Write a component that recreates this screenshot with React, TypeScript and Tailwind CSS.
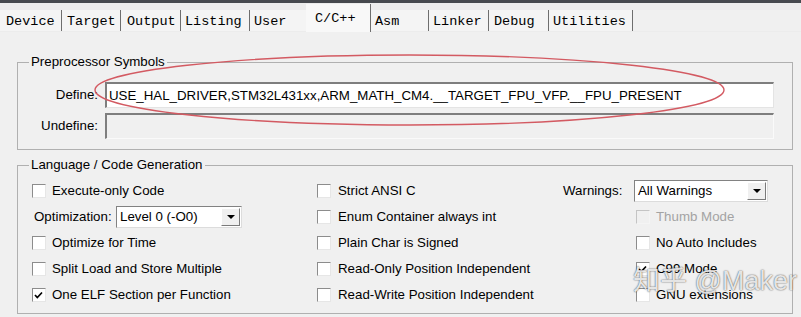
import React from "react";

const Check = ({ checked = false, disabled = false }: { checked?: boolean; disabled?: boolean }) => (
  <div
    className={
      disabled
        ? "w-[14px] h-[14px] shrink-0 border-t border-l border-t-[#c4c4c4] border-l-[#c4c4c4] border-r border-b border-r-[#f4f4f4] border-b-[#f4f4f4] bg-[#f0f0f0]"
        : "w-[14px] h-[14px] shrink-0 border-t border-l border-t-[#8c8c8c] border-l-[#8c8c8c] border-r border-b border-r-[#e6e6e6] border-b-[#e6e6e6] bg-white flex items-center justify-center"
    }
  >
    {checked && (
      <svg width="9" height="9" viewBox="0 0 9 9" className="-ml-[2px]">
        <path d="M1 4 L3.3 6.5 L8 1.5" fill="none" stroke="#000" strokeWidth="1.7" />
      </svg>
    )}
  </div>
);

const Row = ({
  label,
  checked,
  disabled,
  gap,
}: {
  label: string;
  checked?: boolean;
  disabled?: boolean;
  gap: string;
}) => (
  <div className={"h-[26px] flex items-center " + gap}>
    <Check checked={checked} disabled={disabled} />
    <span className={disabled ? "text-[#a3a3a3] leading-none" : "leading-none"}>{label}</span>
  </div>
);

const Select = ({ value, w }: { value: string; w: string }) => (
  <div
    className={
      "flex h-[22px] border-t border-l border-t-[#828282] border-l-[#828282] border-r border-b border-r-[#dcdcdc] border-b-[#dcdcdc] bg-white " +
      w
    }
  >
    <span className="flex-1 pl-[3px] leading-[20px]">{value}</span>
    <div className="w-[19px] h-[18px] mt-[1px] mr-[1px] bg-[#f0f0f0] border-t border-l border-t-white border-l-white border-r border-b border-r-[#7a7a7a] border-b-[#7a7a7a] flex items-center justify-center">
      <div className="w-0 h-0 border-l-[4px] border-r-[4px] border-t-[4px] border-l-transparent border-r-transparent border-t-black" />
    </div>
  </div>
);

const tabs: { name: string; cls: string }[] = [
  { name: "Device", cls: "w-[62px] pl-[6px] border-r border-r-[#6e6e6e]" },
  { name: "Target", cls: "w-[59px] pl-[5px] border-r border-r-[#6e6e6e]" },
  { name: "Output", cls: "w-[60px] pl-[6px] border-r border-r-[#6e6e6e]" },
  { name: "Listing", cls: "w-[69px] pl-[4px] border-r border-r-[#6e6e6e]" },
  { name: "User", cls: "w-[56px] pl-[4px]" },
];
const tabs2: { name: string; cls: string }[] = [
  { name: "Asm", cls: "w-[58px] pl-[4px] border-r border-r-[#6e6e6e]" },
  { name: "Linker", cls: "w-[60px] pl-[4px] border-r border-r-[#6e6e6e]" },
  { name: "Debug", cls: "w-[60px] pl-[5px] border-r border-r-[#6e6e6e]" },
  { name: "Utilities", cls: "w-[84px] pl-[4px] border-r border-r-[#6e6e6e]" },
];

export default function App() {
  return (
    <div className="w-[801px] h-[317px] bg-[#f0f0f0] relative overflow-hidden font-['Liberation_Sans',Arial,sans-serif] text-[13.3px] text-black">
      <div className="h-[3px] bg-[#46494e]" />
      {/* Tabs */}
      <div className="h-[29px] flex items-end bg-[#ececec] font-['Liberation_Mono',monospace] text-[13.5px]">
        {tabs.map((t) => (
          <div key={t.name} className={"h-[21px] mb-[1px] pt-[3px] leading-[18px] bg-[#f4f4f4] " + t.cls}>
            {t.name}
          </div>
        ))}
        <div className="w-[65px] h-[28px] pl-[9px] pt-[6px] bg-[#f8f8f8] border-r border-r-[#6e6e6e] leading-[18px]">
          C/C++
        </div>
        {tabs2.map((t) => (
          <div key={t.name} className={"h-[21px] mb-[1px] pt-[3px] leading-[18px] bg-[#f4f4f4] " + t.cls}>
            {t.name}
          </div>
        ))}
        <div className="flex-1 h-[21px] mb-[1px] bg-[#f0f0f0]" />
      </div>

      <div className="pl-[17px]">
        {/* Preprocessor Symbols */}
        <fieldset className="mt-[22px] w-[776px] h-[96px] border border-[#b0b0b0]">
          <legend className="ml-[11px] px-[2px] leading-[16px]">Preprocessor Symbols</legend>
          <div className="mt-[12px] flex items-center gap-[7px]">
            <span className="w-[80px] text-right">Define:</span>
            <div className="w-[669px] h-[26px] border-t-2 border-l-2 border-t-[#7e7e7e] border-l-[#7e7e7e] border-r border-b border-r-[#e4e4e4] border-b-[#e4e4e4] bg-white pl-[2px] leading-[23px] whitespace-nowrap">
              USE_HAL_DRIVER,STM32L431xx,ARM_MATH_CM4.__TARGET_FPU_VFP.__FPU_PRESENT
            </div>
          </div>
          <div className="mt-[5px] flex items-center gap-[7px]">
            <span className="w-[80px] text-right">Undefine:</span>
            <div className="w-[669px] h-[26px] border-t-2 border-l-2 border-t-[#7e7e7e] border-l-[#7e7e7e] border-r border-b border-r-[#fafafa] border-b-[#fafafa] bg-[#f0f0f0]" />
          </div>
        </fieldset>

        {/* Language / Code Generation */}
        <fieldset className="mt-[7px] w-[776px] h-[157px] border border-[#b0b0b0]">
          <legend className="ml-[11px] px-[2px] leading-[16px]">Language / Code Generation</legend>
          <div className="pt-[5px] pl-[14px] flex">
            <div className="w-[285px] flex flex-col">
              <Row label="Execute-only Code" gap="gap-[6px]" />
              <div className="h-[26px] flex items-center">
                <span className="w-[84px] pl-[2px] leading-none">Optimization:</span>
                <Select value="Level 0 (-O0)" w="w-[126px]" />
              </div>
              <Row label="Optimize for Time" gap="gap-[6px]" />
              <Row label="Split Load and Store Multiple" gap="gap-[6px]" />
              <Row label="One ELF Section per Function" gap="gap-[6px]" checked />
            </div>
            <div className="w-[246px] flex flex-col">
              <Row label="Strict ANSI C" gap="gap-[7px]" />
              <Row label="Enum Container always int" gap="gap-[7px]" />
              <Row label="Plain Char is Signed" gap="gap-[7px]" />
              <Row label="Read-Only Position Independent" gap="gap-[7px]" />
              <Row label="Read-Write Position Independent" gap="gap-[7px]" />
            </div>
            <div className="flex flex-col">
              <div className="h-[26px] flex items-center">
                <span className="w-[71px] leading-none">Warnings:</span>
                <Select value="All Warnings" w="w-[134px]" />
              </div>
              <div className="pl-[73px]">
                <Row label="Thumb Mode" gap="gap-[6px]" disabled />
                <Row label="No Auto Includes" gap="gap-[6px]" />
                <Row label="C99 Mode" gap="gap-[6px]" checked />
                <Row label="GNU extensions" gap="gap-[6px]" />
              </div>
            </div>
          </div>
        </fieldset>
      </div>

      {/* Red annotation ellipse */}
      <svg className="absolute left-0 top-0 pointer-events-none" width="801" height="317">
        <ellipse cx="409.5" cy="90" rx="314.5" ry="35" fill="none" stroke="#d35a62" strokeWidth="1.4" />
      </svg>

      {/* Watermark */}
      <div className="absolute left-[633px] top-[265px] text-[27px] leading-[32px] text-white/85 whitespace-nowrap font-['Liberation_Sans','Noto_Sans_CJK_SC',sans-serif] [text-shadow:0_0_1px_rgba(0,0,0,0.6),0_0_2px_rgba(0,0,0,0.4)]">
        知乎 @Maker
      </div>
    </div>
  );
}
